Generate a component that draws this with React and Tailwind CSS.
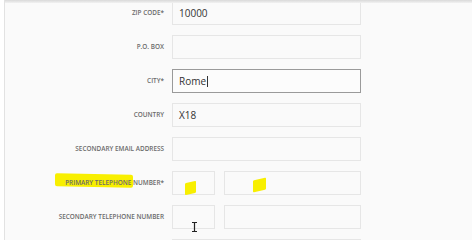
import React from 'react';

const font = { fontFamily: '"Open Sans", "Noto Sans", sans-serif' };

const Label = ({ children }) => (
  <div className="flex h-[24px] items-center justify-end text-[6.4px] font-semibold uppercase tracking-[0px] text-[#6b6b6b]">
    {children}
  </div>
);

const Field = ({ value, active, children }) => (
  <div
    className={`relative flex h-[24px] items-center px-[6px] text-[10px] text-[#333] ${
      active ? 'border border-[#9a9a9a] bg-[#fcfcfc]' : 'border border-[#e6e6e6] bg-[#fafafa]'
    }`}
  >
    {value}
    {children}
  </div>
);

const Marker = ({ className }) => (
  <span className={`absolute h-[12px] -skew-y-[12deg] rounded-[1px] bg-[#f8ef00] ${className}`} />
);

export default function App() {
  return (
    <div className="h-[247px] w-[474px] overflow-hidden bg-white" style={font}>
      <div className="relative ml-[4px] h-[240px] w-[468px] overflow-hidden border-l border-[#e2e2e2] bg-[#fafafa]">
        <div className="absolute left-0 right-0 top-0 z-10 h-[3px] bg-gradient-to-b from-[#d9d9d9] to-[#f2f2f2]" />

        <div className="mt-[1px] grid grid-cols-[159px_189px] gap-x-[8px] gap-y-[10px]">
          <Label>Zip code*</Label>
          <Field value="10000" />

          <Label>P.O. Box</Label>
          <Field />

          <Label>City*</Label>
          <Field
            active
            value={
              <span className="flex items-center">
                Rome<span className="ml-[1px] h-[11px] w-px bg-[#333]" />
              </span>
            }
          />

          <Label>Country</Label>
          <Field value="X18" />

          <Label>Secondary email address</Label>
          <Field />

          <Label>
            <span className="relative">
              <span className="absolute -left-[10px] right-[-2px] top-[-4px] h-[13px] skew-y-[1deg] rounded-[2px] bg-[#f8ef00]" />
              <span className="relative">Primary telephone</span>
            </span>
            &nbsp;number*
          </Label>
          <div className="flex gap-[9px]">
            <div className="w-[43px]">
              <Field>
                <Marker className="left-[12px] top-[10px] w-[11px]" />
              </Field>
            </div>
            <div className="flex-1">
              <Field>
                <Marker className="left-[28px] top-[7px] w-[13px]" />
              </Field>
            </div>
          </div>

          <Label>Secondary telephone number</Label>
          <div className="flex gap-[9px]">
            <div className="relative w-[43px]">
              <Field />
              <svg className="absolute left-[19px] top-[17px] z-10" width="7" height="10" viewBox="0 0 7 10">
                <path d="M1 0.5h5M3.5 0.5v9M1 9.5h5" stroke="#222" strokeWidth="1.2" fill="none" />
              </svg>
            </div>
            <div className="flex-1">
              <Field />
            </div>
          </div>

          <div />
          <Field />
        </div>
      </div>
    </div>
  );
}
